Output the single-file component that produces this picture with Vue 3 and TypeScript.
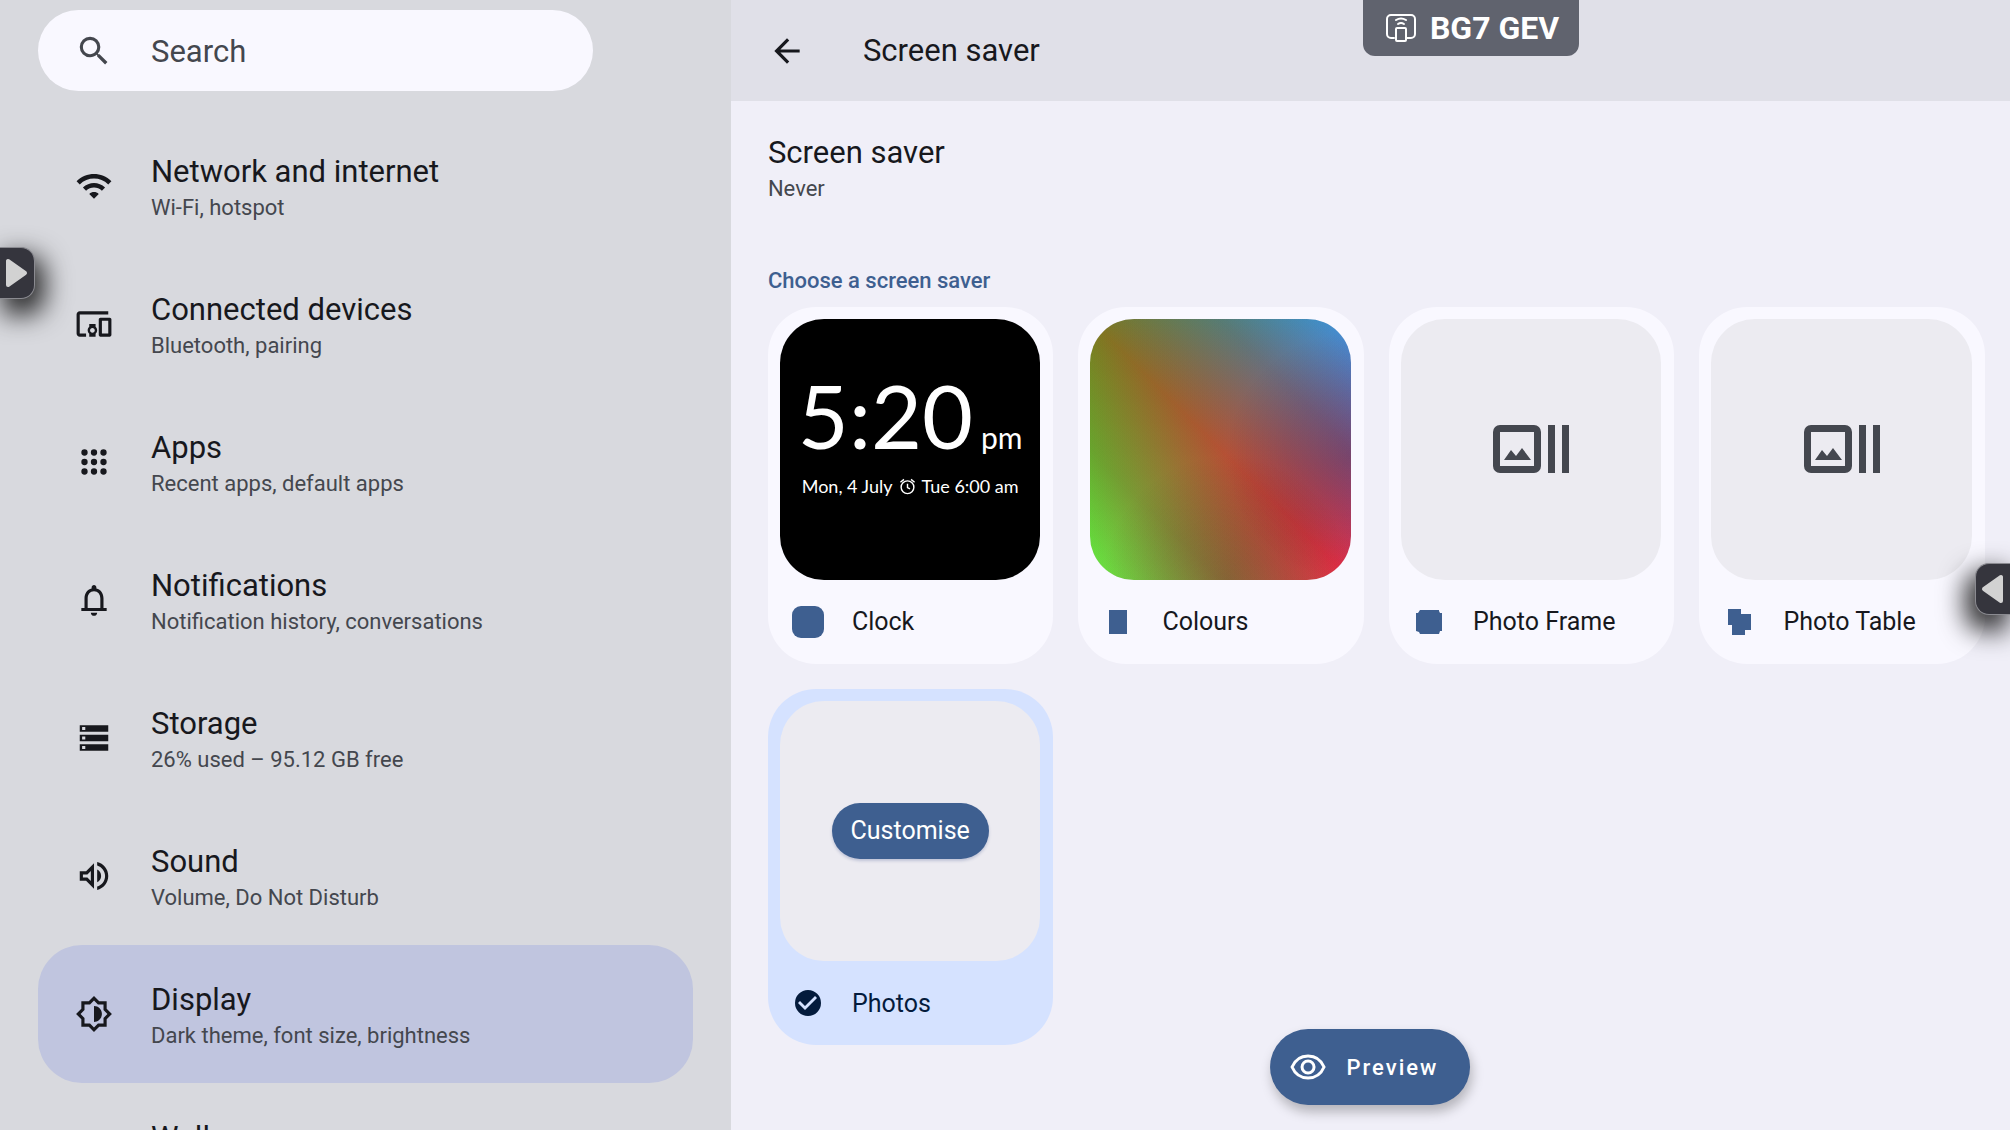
<script setup lang="ts">
import { ref } from 'vue'

interface SettingsEntry {
  id: string
  title: string
  summary: string
  icon: string
}

interface Saver {
  id: string
  label: string
  kind: 'clock' | 'colours' | 'photo' | 'custom'
  icon: string
}

const entries: SettingsEntry[] = [
  {
    id: 'network',
    title: 'Network and internet',
    summary: 'Wi-Fi, hotspot',
    icon: 'M1 9l2 2c4.97-4.97 13.03-4.97 18 0l2-2C16.93 2.93 7.08 2.93 1 9zm8 8l3 3 3-3c-1.65-1.66-4.34-1.66-6 0zm-4-4l2 2c2.76-2.76 7.24-2.76 10 0l2-2C15.14 9.14 8.87 9.14 5 13z',
  },
  {
    id: 'devices',
    title: 'Connected devices',
    summary: 'Bluetooth, pairing',
    icon: 'M3 6h18V4H3c-1.1 0-2 .9-2 2v12c0 1.1.9 2 2 2h4v-2H3V6zm10 6H9v1.78c-.61.55-1 1.33-1 2.22s.39 1.67 1 2.22V20h4v-1.78c.61-.55 1-1.34 1-2.22s-.39-1.67-1-2.22V12zm-2 5.5c-.83 0-1.5-.67-1.5-1.5s.67-1.5 1.5-1.5 1.5.67 1.5 1.5-.67 1.5-1.5 1.5zM22 8h-6c-.5 0-1 .5-1 1v10c0 .5.5 1 1 1h6c.5 0 1-.5 1-1V9c0-.5-.5-1-1-1zm-1 10h-4v-8h4v8z',
  },
  {
    id: 'apps',
    title: 'Apps',
    summary: 'Recent apps, default apps',
    icon: 'M6 8a2 2 0 100-4 2 2 0 000 4zm6 0a2 2 0 100-4 2 2 0 000 4zm6 0a2 2 0 100-4 2 2 0 000 4zM6 14a2 2 0 100-4 2 2 0 000 4zm6 0a2 2 0 100-4 2 2 0 000 4zm6 0a2 2 0 100-4 2 2 0 000 4zM6 20a2 2 0 100-4 2 2 0 000 4zm6 0a2 2 0 100-4 2 2 0 000 4zm6 0a2 2 0 100-4 2 2 0 000 4z',
  },
  {
    id: 'notifications',
    title: 'Notifications',
    summary: 'Notification history, conversations',
    icon: 'M18 17v-6c0-3.07-1.63-5.64-4.5-6.32V4c0-.83-.67-1.5-1.5-1.5s-1.5.67-1.5 1.5v.68C7.64 5.36 6 7.92 6 11v6H4v2h16v-2h-2zm-2 0H8v-6c0-2.48 1.51-4.5 4-4.5s4 2.02 4 4.5v6zM10 20h4c0 1.1-.9 2-2 2s-2-.9-2-2z',
  },
  {
    id: 'storage',
    title: 'Storage',
    summary: '26% used – 95.12 GB free',
    icon: 'M3 4v4h18V4H3zm3.5 3h-2V5h2v2zM3 10v4h18v-4H3zm3.5 3h-2v-2h2v2zM3 16v4h18v-4H3zm3.5 3h-2v-2h2v2z',
  },
  {
    id: 'sound',
    title: 'Sound',
    summary: 'Volume, Do Not Disturb',
    icon: 'M3 9v6h4l5 5V4L7 9H3zm7-.17v6.34L7.83 13H5v-2h2.83L10 8.83zM16.5 12c0-1.77-1.02-3.29-2.5-4.03v8.05c1.48-.73 2.5-2.25 2.5-4.02zM14 3.23v2.06c2.89.86 5 3.54 5 6.71s-2.11 5.85-5 6.71v2.06c4.01-.91 7-4.49 7-8.77s-2.99-7.86-7-8.77z',
  },
  {
    id: 'display',
    title: 'Display',
    summary: 'Dark theme, font size, brightness',
    icon: 'M20 8.69V4h-4.69L12 .69 8.69 4H4v4.69L.69 12 4 15.31V20h4.69L12 23.31 15.31 20H20v-4.69L23.31 12 20 8.69zm-2 5.79V18h-3.52L12 20.48 9.52 18H6v-3.52L3.52 12 6 9.52V6h3.52L12 3.52 14.48 6H18v3.52L20.48 12 18 14.48zM12 7v10c2.76 0 5-2.24 5-5s-2.24-5-5-5z',
  },
  {
    id: 'wallpaper',
    title: 'Wallpaper',
    summary: '',
    icon: 'M4 4h7V2H4c-1.1 0-2 .9-2 2v7h2V4z',
  },
]

const savers: Saver[] = [
  { id: 'clock', label: 'Clock', kind: 'clock', icon: 'M9 0h14a9 9 0 019 9v14a9 9 0 01-9 9H9a9 9 0 01-9-9V9a9 9 0 019-9z' },
  { id: 'colours', label: 'Colours', kind: 'colours', icon: 'M7 4h18v24H7z' },
  { id: 'frame', label: 'Photo Frame', kind: 'photo', icon: 'M7 4h19v1l1 2h2v18h-2l-1 3H7l-1-2-3-1V7h2z' },
  { id: 'table', label: 'Photo Table', kind: 'photo', icon: 'M5 3h13v5h10v16h-6v5H9V19H5z' },
  { id: 'photos', label: 'Photos', kind: 'custom', icon: 'M16 3a13 13 0 100 26 13 13 0 000-26zM13 23l-7-7 2-2 5 5 10-10 2 2z' },
]

const current = ref('display')
const chosen = ref('photos')
const query = ref('')
</script>

<template>
  <div class="screen">
    <nav class="sidebar" aria-label="Settings">
      <label class="search">
        <svg class="icon" viewBox="0 0 24 24" aria-hidden="true">
          <path d="M15.5 14h-.79l-.28-.27A6.47 6.47 0 0016 9.5 6.5 6.5 0 109.5 16c1.61 0 3.09-.59 4.23-1.57l.27.28v.79l5 4.99L20.49 19l-4.99-5zm-6 0C7.01 14 5 11.99 5 9.5S7.01 5 9.5 5 14 7.01 14 9.5 11.99 14 9.5 14z" />
        </svg>
        <input v-model="query" type="text" placeholder="Search" aria-label="Search" />
      </label>
      <ul class="entries">
        <li v-for="entry in entries" :key="entry.id">
          <a
            class="entry"
            :class="{ active: entry.id === current }"
            :href="'#' + entry.id"
            @click.prevent="current = entry.id"
          >
            <svg class="icon" viewBox="0 0 24 24" aria-hidden="true"><path :d="entry.icon" /></svg>
            <span class="lines">
              <span class="title">{{ entry.title }}</span>
              <span class="summary">{{ entry.summary }}</span>
            </span>
          </a>
        </li>
      </ul>
    </nav>

    <main class="content">
      <header class="topbar">
        <button class="back" type="button" aria-label="Back">
          <svg class="icon" viewBox="0 0 24 24" aria-hidden="true">
            <path d="M20 11H7.83l5.59-5.59L12 4l-8 8 8 8 1.41-1.41L7.83 13H20v-2z" />
          </svg>
        </button>
        <h1 class="title">Screen saver</h1>
      </header>

      <section class="body">
        <a class="when" href="#when">
          <span class="title">Screen saver</span>
          <span class="summary">Never</span>
        </a>
        <h2 class="section-name">Choose a screen saver</h2>

        <div class="grid">
          <article v-for="saver in savers" :key="saver.id" class="card" :class="{ selected: saver.id === chosen }">
            <div class="preview" :class="saver.kind">
              <template v-if="saver.kind === 'clock'">
                <div class="time">5:20<span class="half">pm</span></div>
                <div class="date">
                  <span>Mon, 4 July</span>
                  <svg class="alarm" viewBox="0 0 24 24" aria-hidden="true">
                    <circle cx="12" cy="13" r="9" />
                    <path d="M12 8v5.5l3.5 2M2 6l5-4M22 6l-5-4" />
                  </svg>
                  <span>Tue 6:00 am</span>
                </div>
              </template>
              <!-- Four-corner colour mesh: two triangles, each the sum of its corner ramps -->
              <svg v-else-if="saver.kind === 'colours'" class="mesh" viewBox="0 0 100 100" preserveAspectRatio="none" aria-hidden="true">
                <defs>
                  <linearGradient id="tl-x"><stop offset="0" stop-color="#7c7820" /><stop offset="1" stop-color="#000" /></linearGradient>
                  <linearGradient id="tl-y" x2="0" y2="1"><stop offset="0" stop-color="#7c7820" /><stop offset="1" stop-color="#000" /></linearGradient>
                  <linearGradient id="br-y" x2="0" y2="1"><stop offset="0" stop-color="#000" /><stop offset="1" stop-color="#ea2c48" /></linearGradient>
                  <linearGradient id="br-x"><stop offset="0" stop-color="#000" /><stop offset="1" stop-color="#ea2c48" /></linearGradient>
                  <linearGradient id="tr" x1="0.5" y1="0.5" x2="1" y2="0"><stop offset="0" stop-color="#000" /><stop offset="0.5" stop-color="#184064" /><stop offset="1" stop-color="#3a94e0" /></linearGradient>
                  <linearGradient id="bl" x1="0.5" y1="0.5" x2="0" y2="1"><stop offset="0" stop-color="#000" /><stop offset="0.5" stop-color="#2a681d" /><stop offset="1" stop-color="#64ee42" /></linearGradient>
                  <radialGradient id="dim"><stop offset="0" stop-color="#000" stop-opacity="0.18" /><stop offset="0.5" stop-color="#000" stop-opacity="0.1" /><stop offset="1" stop-color="#000" stop-opacity="0" /></radialGradient>
                </defs>
                <g shape-rendering="crispEdges">
                  <path class="add" fill="url(#tl-x)" d="M0 0H100V100z" />
                  <path class="add" fill="url(#br-y)" d="M0 0H100V100z" />
                  <path class="add" fill="url(#tr)" d="M0 0H100V100z" />
                  <path class="add" fill="url(#tl-y)" d="M0 0V100H100z" />
                  <path class="add" fill="url(#br-x)" d="M0 0V100H100z" />
                  <path class="add" fill="url(#bl)" d="M0 0V100H100z" />
                </g>
                <circle cx="53" cy="100" r="48" fill="url(#dim)" />
                <circle cx="100" cy="53" r="48" fill="url(#dim)" />
              </svg>
              <svg v-else-if="saver.kind === 'photo'" class="album" viewBox="0 0 76 48" aria-hidden="true">
                <path fill-rule="evenodd" d="M7 0h34a7 7 0 017 7v34a7 7 0 01-7 7H7a7 7 0 01-7-7V7a7 7 0 017-7zM7 7v34h34V7zM55 0h7v48h-7zM69 0h7v48h-7zM11 35l7-10 5 6 6-8 9 12z" />
              </svg>
              <button v-else class="customise" type="button">Customise</button>
            </div>
            <label class="name">
              <input v-model="chosen" type="radio" name="saver" :value="saver.id" />
              <svg class="shape" viewBox="0 0 32 32" fill-rule="evenodd" aria-hidden="true"><path :d="saver.icon" /></svg>
              <span>{{ saver.label }}</span>
            </label>
          </article>
        </div>
      </section>

      <button class="fab" type="button">
        <svg viewBox="0 0 36 26" aria-hidden="true">
          <path d="M2 13C5 6 11 2 18 2s13 4 16 11c-3 7-9 11-16 11S5 20 2 13z" />
          <circle cx="18" cy="13" r="6" />
        </svg>
        <span>Preview</span>
      </button>

      <div class="badge">
        <svg viewBox="0 0 30 28" aria-hidden="true">
          <path d="M8 24H5a4 4 0 01-4-4V5a4 4 0 014-4h20a4 4 0 014 4v15a4 4 0 01-4 4h-4" />
          <rect x="10" y="14" width="10" height="13" rx="1" />
          <path d="M10 6q5-3 10 0M12 10q3-2 6 0" />
        </svg>
        <span>BG7 GEV</span>
      </div>
    </main>

    <button class="handle left" type="button" aria-label="Open left panel">
      <svg viewBox="0 0 34 50" aria-hidden="true"><path d="M8 13v24l17-12z" /></svg>
    </button>
    <button class="handle right" type="button" aria-label="Open right panel">
      <svg viewBox="0 0 34 50" aria-hidden="true"><path d="M25 13v24L8 25z" /></svg>
    </button>
  </div>
</template>

<style>
body {
  margin: 0;
  overflow: hidden;
}
</style>

<style scoped>
.screen {
  position: relative;
  display: grid;
  grid-template-columns: 4fr 7fr;
  height: 100vh;
  overflow: hidden;
  font-family: Roboto, "Liberation Sans", sans-serif;
  color: #17181d;
  background: #d8d9de;
}

button {
  border: 0;
  padding: 0;
  font: inherit;
  cursor: pointer;
}

a {
  color: inherit;
  text-decoration: none;
}

.icon {
  width: 38px;
  height: 38px;
  flex: none;
  fill: currentColor;
}

.title {
  margin: 0;
  font-size: 31px;
  font-weight: 400;
  line-height: 44px;
}

.summary {
  min-height: 28px;
  font-size: 22px;
  line-height: 28px;
  color: #44474e;
}

.sidebar {
  min-width: 0;
  min-height: 0;
  overflow: hidden;
  padding: 10px 38px 0;
}

.search {
  display: flex;
  align-items: center;
  gap: 38px;
  height: 81px;
  margin-right: 100px;
  padding-left: 37px;
  border-radius: 41px;
  background: #f9f8ff;
  color: #44474e;
}

.search input {
  flex: 1;
  min-width: 0;
  padding: 2px 0 0;
  border: 0;
  outline: 0;
  background: none;
  font: inherit;
  font-size: 31px;
  color: #44474e;
}

.search input::placeholder {
  color: #44474e;
  opacity: 1;
}

.entries {
  margin: 26px 0 0;
  padding: 0;
  list-style: none;
}

.entry {
  display: flex;
  align-items: center;
  gap: 38px;
  height: 138px;
  padding-left: 37px;
  border-radius: 44px;
}

.entry.active {
  background: #c0c5df;
}

.lines,
.when {
  display: flex;
  flex-direction: column;
}

.content {
  position: relative;
  min-width: 0;
  background: #f0eff8;
}

.topbar {
  display: flex;
  align-items: center;
  gap: 57px;
  height: 101px;
  padding-left: 37px;
  background: #e0e0e8;
}

.back {
  display: flex;
  background: none;
  color: #17181d;
}

.body {
  padding: 30px 25px 0 37px;
}

.section-name {
  margin: 63px 0 11px;
  font-size: 22px;
  font-weight: 500;
  line-height: 30px;
  color: #3e5f90;
}

.grid {
  display: grid;
  grid-template-columns: repeat(4, 1fr);
  gap: 25px;
}

.card {
  padding: 12px 13px 0 12px;
  border-radius: 48px;
  background: #f9f8ff;
}

.card.selected {
  background: #d5e2ff;
  color: #041b3c;
}

.preview {
  display: flex;
  flex-direction: column;
  align-items: center;
  justify-content: center;
  aspect-ratio: 1;
  overflow: hidden;
  border-radius: 44px;
  background: #ecebf1;
}

.preview.clock {
  box-sizing: border-box;
  padding-bottom: 18px;
  background: #000;
  color: #fff;
  font-family: Lato, sans-serif;
}

.time {
  font-size: 88px;
  line-height: 70px;
}

.half {
  margin-left: 8px;
  font-size: 30px;
}

.date {
  display: flex;
  align-items: center;
  gap: 6px;
  font-size: 18px;
  line-height: 28px;
  white-space: nowrap;
}

.alarm {
  width: 17px;
  height: 17px;
  fill: none;
  stroke: currentColor;
  stroke-width: 2;
}

.mesh {
  width: 100%;
  height: 100%;
  isolation: isolate;
}

.add {
  mix-blend-mode: plus-lighter;
}

.album {
  width: 76px;
  fill: #44474f;
}

.customise {
  height: 56px;
  padding: 0 19px;
  border-radius: 28px;
  background: #3e5f90;
  color: #fff;
  font-size: 25px;
  box-shadow: 0 2px 3px rgb(60 80 140 / 25%);
}

.name {
  display: flex;
  align-items: center;
  gap: 28px;
  height: 84px;
  padding-left: 12px;
  font-size: 25px;
  cursor: pointer;
}

.name input {
  position: absolute;
  opacity: 0;
  pointer-events: none;
}

.shape {
  width: 32px;
  height: 32px;
  fill: #3e5f90;
}

.selected .shape {
  fill: #041b3c;
}

.fab {
  position: absolute;
  bottom: 25px;
  left: 50%;
  transform: translateX(-50%);
  display: flex;
  align-items: center;
  gap: 20px;
  height: 76px;
  padding: 0 32px 0 20px;
  border-radius: 38px;
  background: #3e5f90;
  color: #fff;
  font-size: 22px;
  font-weight: 500;
  letter-spacing: 2px;
  box-shadow: 2px 7px 12px rgb(0 0 0 / 25%);
}

.fab svg {
  width: 36px;
  height: 26px;
  fill: none;
  stroke: currentColor;
  stroke-width: 3;
}

.badge {
  position: absolute;
  top: 0;
  left: 632px;
  display: flex;
  align-items: center;
  gap: 14px;
  height: 56px;
  padding: 0 20px 0 23px;
  border-radius: 0 0 12px 12px;
  background: #60636e;
  color: #fff;
  font-size: 32px;
  font-weight: 700;
}

.badge svg {
  width: 30px;
  height: 28px;
  fill: none;
  stroke: currentColor;
  stroke-width: 2;
  stroke-linecap: round;
}

.handle {
  position: absolute;
  display: flex;
  align-items: center;
  box-sizing: border-box;
  width: 35px;
  height: 52px;
  background: #35353d;
  border: 1px solid #8a8a90;
}

.handle svg {
  width: 34px;
  height: 50px;
  fill: #d2d2d2;
  stroke: #d2d2d2;
  stroke-width: 4;
  stroke-linejoin: round;
}

.handle.left {
  top: 247px;
  left: 0;
  border-left: 0;
  border-radius: 0 14px 14px 0;
  box-shadow: 6px 12px 26px 4px rgb(0 0 0 / 80%);
}

.handle.right {
  top: 563px;
  right: 0;
  border-right: 0;
  border-radius: 14px 0 0 14px;
  box-shadow: -6px 12px 26px 4px rgb(0 0 0 / 80%);
}
</style>
